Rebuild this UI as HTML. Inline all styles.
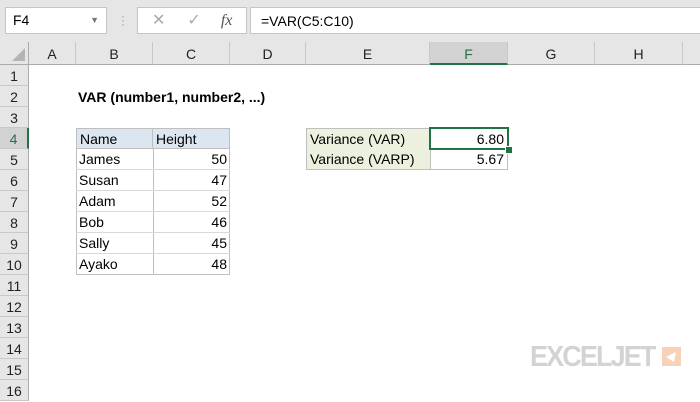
<!DOCTYPE html><html><head><style>
body{margin:0;width:700px;height:400px;overflow:hidden;background:#fff;font-family:"Liberation Sans",sans-serif;position:relative}
.a{position:absolute}
.top{left:0;top:0;width:700px;height:42px;background:#e6e6e6}
.box{background:#fff;border:1px solid #c6c6c6;box-sizing:border-box}
.ch{top:42px;height:23px;background:#e6e6e6;border-right:1px solid #c8c8c8;border-bottom:1px solid #ababab;box-sizing:border-box;text-align:center;font-size:14px;line-height:24px;color:#222}
.rh{left:0;width:29px;height:21px;background:#e6e6e6;border-bottom:1px solid #c8c8c8;border-right:1px solid #ababab;box-sizing:border-box;text-align:center;font-size:14px;line-height:22px;color:#222}
.c{height:21px;box-sizing:border-box;font-size:14px;line-height:21px;padding:0 3px;color:#000}
</style></head><body>
<div class="a top"></div>
<div class="a box" style="left:5px;top:7px;width:102px;height:27px;font-size:14px;line-height:25px;padding-left:7px">F4<span style="position:absolute;right:7px;top:0;font-size:9px;color:#777">▼</span></div>
<div class="a" style="left:121px;top:14px;color:#999;font-size:12px;line-height:4px">·<br>·<br>·</div>
<div class="a box" style="left:137px;top:7px;width:110px;height:27px;color:#aaa;font-size:16px;line-height:25px"><span style="margin-left:14px">✕</span><span style="margin-left:22px">✓</span><span style="margin-left:20px;font-style:italic;font-family:'Liberation Serif';color:#555">fx</span></div>
<div class="a box" style="left:250px;top:7px;width:460px;height:27px;font-size:14px;line-height:26px;padding-left:10px">=VAR(C5:C10)</div>
<div class="a" style="left:0;top:42px;width:29px;height:23px;background:#e6e6e6;border-right:1px solid #ababab;border-bottom:1px solid #ababab;box-sizing:border-box"><div style="position:absolute;right:3px;bottom:3px;width:0;height:0;border-left:13px solid transparent;border-bottom:13px solid #b4b4b4"></div></div>
<div class="a ch" style="left:29px;width:47px">A</div>
<div class="a ch" style="left:76px;width:77px">B</div>
<div class="a ch" style="left:153px;width:77px">C</div>
<div class="a ch" style="left:230px;width:76px">D</div>
<div class="a ch" style="left:306px;width:124px">E</div>
<div class="a ch" style="left:430px;width:78px;background:#d2d2d2;border-bottom:2px solid #217346;color:#217346">F</div>
<div class="a ch" style="left:508px;width:87px">G</div>
<div class="a ch" style="left:595px;width:88px">H</div>
<div class="a ch" style="left:683px;width:17px;border-right:none"></div>
<div class="a rh" style="top:65px">1</div><div class="a rh" style="top:86px">2</div><div class="a rh" style="top:107px">3</div>
<div class="a rh" style="top:128px;background:#d2d2d2;border-right:2px solid #217346;color:#217346">4</div>
<div class="a rh" style="top:149px">5</div><div class="a rh" style="top:170px">6</div><div class="a rh" style="top:191px">7</div><div class="a rh" style="top:212px">8</div><div class="a rh" style="top:233px">9</div><div class="a rh" style="top:254px">10</div><div class="a rh" style="top:275px">11</div><div class="a rh" style="top:296px">12</div><div class="a rh" style="top:317px">13</div><div class="a rh" style="top:338px">14</div><div class="a rh" style="top:359px">15</div><div class="a rh" style="top:380px">16</div>
<div class="a" style="left:78px;top:87px;font-size:14px;font-weight:bold;line-height:21px">VAR (number1, number2, ...)</div>
<div class="a" style="left:76px;top:128px;width:154px;height:147px;border:1px solid #bfbfbf;box-sizing:border-box"></div>
<div class="a c" style="left:76px;top:128px;width:77px;background:#dce6f1;border:1px solid #bfbfbf;line-height:20px">Name</div>
<div class="a c" style="left:152px;top:128px;width:78px;background:#dce6f1;border:1px solid #bfbfbf;line-height:20px">Height</div>
<div class="a" style="left:153px;top:149px;width:1px;height:126px;background:#bfbfbf"></div>
<div class="a" style="left:76px;top:169px;width:154px;height:1px;background:#d9d9d9;box-shadow:0 21px 0 #d9d9d9,0 42px 0 #d9d9d9,0 63px 0 #d9d9d9,0 84px 0 #d9d9d9"></div>
<div class="a c" style="left:76px;top:149px">James</div><div class="a c" style="left:153px;top:149px;width:77px;text-align:right">50</div>
<div class="a c" style="left:76px;top:170px">Susan</div><div class="a c" style="left:153px;top:170px;width:77px;text-align:right">47</div>
<div class="a c" style="left:76px;top:191px">Adam</div><div class="a c" style="left:153px;top:191px;width:77px;text-align:right">52</div>
<div class="a c" style="left:76px;top:212px">Bob</div><div class="a c" style="left:153px;top:212px;width:77px;text-align:right">46</div>
<div class="a c" style="left:76px;top:233px">Sally</div><div class="a c" style="left:153px;top:233px;width:77px;text-align:right">45</div>
<div class="a c" style="left:76px;top:254px">Ayako</div><div class="a c" style="left:153px;top:254px;width:77px;text-align:right">48</div>
<div class="a c" style="left:306px;top:128px;width:125px;height:22px;background:#ebf1de;border:1px solid #bfbfbf;line-height:20px">Variance (VAR)</div>
<div class="a c" style="left:306px;top:149px;width:125px;height:21px;background:#ebf1de;border:1px solid #bfbfbf;border-top:none;line-height:20px">Variance (VARP)</div>
<div class="a c" style="left:430px;top:149px;width:78px;border:1px solid #bfbfbf;border-top:none;text-align:right;line-height:20px">5.67</div>
<div class="a c" style="left:429px;top:127px;width:80px;height:23px;border:2px solid #217346;text-align:right;line-height:20px">6.80</div>
<div class="a" style="left:505px;top:146px;width:6px;height:6px;background:#217346;border:1px solid #fff"></div>
<div class="a" style="left:530px;top:341px;font-size:29px;font-weight:bold;color:#d3d3d3;letter-spacing:-2px;transform:scaleX(0.93);transform-origin:left">EXCELJET</div>
<div class="a" style="left:662px;top:347px;width:19px;height:19px;background:#f6d3b8"><svg width="19" height="19"><path d="M4 10 L14 5 L12 15 Z" fill="#fff"/></svg></div>
</body></html>
